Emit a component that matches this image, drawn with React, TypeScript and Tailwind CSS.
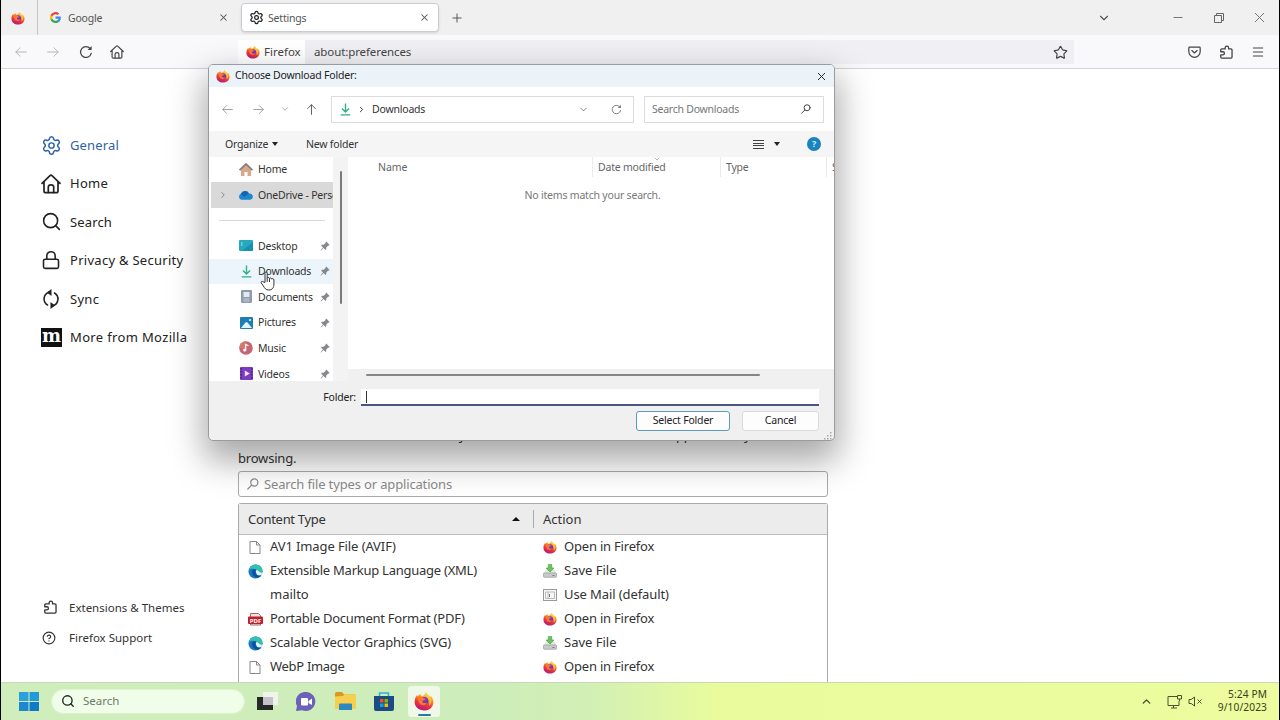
import React from 'react';
import { ChevronDown, ChevronRight, ChevronUp, Lock, Menu, Plus, Search, Settings, Star, X, CircleHelp } from 'lucide-react';

type IconProps = { size?: number; className?: string };

const FirefoxLogo = ({ size = 14, className = '' }: IconProps) => (
  <svg width={size} height={size} viewBox="0 0 32 32" className={className}>
    <defs>
      <linearGradient id="ffBody" x1="0.75" y1="0" x2="0.35" y2="1">
        <stop offset="0" stopColor="#ffe14a" />
        <stop offset="0.35" stopColor="#ff9823" />
        <stop offset="0.65" stopColor="#ea3540" />
        <stop offset="1" stopColor="#b5197c" />
      </linearGradient>
      <radialGradient id="ffGlobe" cx="0.5" cy="0.3" r="0.8">
        <stop offset="0" stopColor="#8d45d8" />
        <stop offset="1" stopColor="#4b2a9c" />
      </radialGradient>
    </defs>
    <path d="M19 2c1 3 4 4 7 8 .6-.8.5-2 .3-2.800C30 11 31.500 15 31 19c-1 8-7.500 12-15 12S1 26 1 17.500C1 12 3 9 5 6.500c.1 1 .3 1.700.8 2.200C7.500 6.500 9 6 10 4.500c.4 2 1.200 3.200 2.500 4C16 8 18 4.500 19 2z" fill="url(#ffBody)" />
    <circle cx="17" cy="15.500" r="6" fill="url(#ffGlobe)" />
    <path d="M5.500 9c4-1 7 0 9.500 2.500 2 .2 3 .8 3 1.700-1 1.800-4.500 1.300-4.500 3.800 1 3 5.500 2.500 7.500 1-1 5-8.500 6.500-12 2C6.500 17 7.500 13 5.500 9z" fill="#ff752c" />
    <path d="M19 2c1 3 4 4 7 8 3 5 2 11-2 14 1-4 1-9-2-12-3-3-5-5-3-10z" fill="#ffc83a" opacity="0.8" />
  </svg>
);

const GoogleLogo = () => (
  <svg width="11" height="11" viewBox="0 0 24 24">
    <path d="M23.500 12.300c0-.8-.1-1.600-.2-2.300H12v4.500h6.500a5.500 5.500 0 0 1-2.400 3.600v3h3.900c2.200-2.100 3.500-5.100 3.500-8.800z" fill="#4285F4" />
    <path d="M12 24c3.200 0 6-1.100 8-2.900l-3.900-3c-1.100.7-2.500 1.200-4.100 1.200-3.100 0-5.800-2.100-6.700-5H1.300v3.100A12 12 0 0 0 12 24z" fill="#34A853" />
    <path d="M5.300 14.300a7 7 0 0 1 0-4.600V6.600h-4a12 12 0 0 0 0 10.800z" fill="#FBBC05" />
    <path d="M12 4.800c1.800 0 3.300.6 4.600 1.800L20 3.200A12 12 0 0 0 1.300 6.600l4 3.100c.9-2.800 3.600-4.900 6.700-4.900z" fill="#EA4335" />
  </svg>
);

const ArrowIcon = ({ dir = 'left', size = 12, className = '' }: IconProps & { dir?: 'left' | 'right' | 'up' }) => {
  const turn = { left: 0, right: 180, up: 90 }[dir];
  return (
    <svg width={size} height={size} viewBox="0 0 12 12" fill="none" stroke="currentColor" strokeLinecap="round" strokeLinejoin="round" className={className}>
      <path transform={`rotate(${turn} 6 6)`} d="M11.300 6H.8M5 1.800.8 6 5 10.200" />
    </svg>
  );
};

const ReloadIcon = ({ size = 14, className = '' }: IconProps) => (
  <svg width={size} height={size} viewBox="0 0 14 14" fill="none" stroke="currentColor" strokeWidth="1.200" strokeLinecap="round" className={className}>
    <path d="M12.200 8.300A5.400 5.400 0 1 1 11.200 3.700" />
    <path d="M12.600 1v4H8.600z" fill="currentColor" stroke="none" />
  </svg>
);

const HomeIcon = ({ size = 14, className = '' }: IconProps) => (
  <svg width={size} height={size} viewBox="0 0 20 20" fill="none" stroke="currentColor" strokeWidth="1.700" strokeLinecap="round" strokeLinejoin="round" className={className}>
    <path d="M1 9.300 9 1.700c.6-.6 1.400-.6 2 0l8 7.600M3 8v9c0 1 .7 1.700 1.700 1.700h10.600c1 0 1.700-.7 1.700-1.700V8" />
    <path d="M7.300 18.500V13c0-1.400 1.200-2.200 2.700-2.200s2.700.8 2.700 2.200v5.500" />
  </svg>
);

const PuzzleIcon = ({ size = 13, className = '' }: IconProps) => (
  <svg width={size} height={size} viewBox="0 0 16 16" fill="none" stroke="currentColor" strokeWidth="1.500" strokeLinejoin="round" className={className}>
    <path d="M7 4.500V3.300a2 2 0 0 1 4 0v1.200h2.700c.7 0 1.200.5 1.200 1.200v8c0 .7-.5 1.200-1.200 1.200H3.200c-.7 0-1.200-.5-1.200-1.200v-2.400h2.400a1.800 1.800 0 0 0 0-3.600H2V5.700c0-.7.500-1.200 1.200-1.200z" />
  </svg>
);

const PocketIcon = () => (
  <svg width="13" height="12" viewBox="0 0 16 14" fill="none" stroke="currentColor" strokeWidth="1.500" strokeLinecap="round" strokeLinejoin="round">
    <path d="M2 1h12c.7 0 1 .4 1 1v4.500a7 7 0 0 1-14 0V2c0-.6.4-1 1-1z" />
    <path d="M4.800 5.200 8 8.200l3.200-3" />
  </svg>
);

const SyncIcon = () => (
  <svg width="20" height="20" viewBox="0 0 20 20" fill="none" stroke="currentColor" strokeWidth="1.600" strokeLinecap="round">
    <path d="M6.500 16A7 7 0 0 1 8 3.300M13.500 4A7 7 0 0 1 12 16.700" />
    <path d="M10.500 0v7L5.800 3.500zM9.500 20v-7l4.700 3.500z" fill="currentColor" stroke="none" />
  </svg>
);

const DownloadArrow = ({ size = 13 }: IconProps) => (
  <svg width={size} height={size} viewBox="0 0 13 14" fill="none" stroke="#2fae87" strokeWidth="1.500" className="shrink-0">
    <path d="M6.500.5v9M2.700 6l3.800 3.800L10.300 6M1.300 12.800h10.400" />
  </svg>
);

const PinIcon = () => (
  <svg width="10" height="10" viewBox="0 0 10 10" fill="#84888d" className="shrink-0">
    <path d="M6.300.6 9.600 3.900 8.800 4.700 8.200 4.600 6.300 6.600 6.200 8.300 5.500 9 3.600 7.100 1 9.600.5 9.300 3 6.500 1.100 4.600 1.800 3.800 3.600 3.800 5.600 1.900 5.500 1.400z" />
  </svg>
);

const MagnifierLeft = ({ size = 11, className = '' }: IconProps) => (
  <svg width={size} height={size} viewBox="0 0 12 12" fill="none" stroke="currentColor" strokeWidth="1.200" strokeLinecap="round" className={className}>
    <circle cx="7.300" cy="4.500" r="3.600" />
    <path d="M4.600 7.200.8 11" />
  </svg>
);

const EdgeLogo = () => (
  <svg width="15" height="15" viewBox="0 0 16 16">
    <circle cx="8" cy="8" r="7.500" fill="#1676c4" />
    <path d="M1 6.500C2 2.500 5 .5 8.300.5c4.200 0 7.200 3 7.200 6.300 0 2.300-1.700 3.500-3.500 3.500-1.500 0-2.500-.6-2.300-1.300.3-.6.4-1 .2-1.800C9 5 4 4 1 6.500z" fill="#35bfb0" />
    <path d="M4.500 8c-.5 3.700 2.500 6.700 6.500 6.300 1.300-.3 2.500-1 3.200-2.300-3 1-5.700 0-6-2.500-.2-1.300.3-2.300 1-2.700C7.500 5 4.700 5.800 4.500 8z" fill="#0e4f9e" />
    <path d="M8.800 9.500c-1-1.500-.4-2.700.9-3 2 1.500 2.600 3.200 6 3-.5 1.500-2 2.700-3.800 2.500-1.600-.1-2.600-1-3.100-2.500z" fill="#e6f6f6" />
  </svg>
);

const FileIcon = () => (
  <svg width="12" height="13" viewBox="0 0 12 13" fill="#fff" stroke="#888">
    <path d="M1 .5h6.500L11 4v8.500H1zM7.500.5V4H11" />
  </svg>
);

const PdfIcon = () => (
  <svg width="15" height="13" viewBox="0 0 15 13">
    <path d="M2.500.5h8l2 2V12h-10z" fill="#f2dede" stroke="#a66" />
    <rect x="0" y="3.500" width="15" height="7.500" rx="1" fill="#bf1e2b" />
    <text x="7.500" y="9.500" fontSize="6" fontWeight="700" textAnchor="middle" fill="#fff" fontFamily="Noto Sans, sans-serif">PDF</text>
  </svg>
);

const SaveIcon = () => (
  <svg width="14" height="14" viewBox="0 0 14 14">
    <path d="M3 5.500h8l2.500 4H.5z" fill="#e2e4e3" />
    <rect x=".5" y="9" width="13" height="4.300" rx=".8" fill="#c6cac8" stroke="#989e9b" strokeWidth=".7" />
    <path d="M5.300.5h3.400V4H11L7 8 3 4h2.300z" fill="#6cc35e" stroke="#429a3b" strokeWidth=".6" />
    <rect x="9.500" y="11" width="2" height="1" fill="#5c8f52" />
  </svg>
);

const MailAppIcon = () => (
  <svg width="14" height="12" viewBox="0 0 14 12" fill="#f8f8f8" stroke="#999">
    <rect x=".5" y=".5" width="13" height="11" />
    <path d="M2.500 3v6.500h9V3zM5 3v6.500" stroke="#bbb" />
    <path d="M6.500 5v3" stroke="#777" />
  </svg>
);

const FOLDER_ICONS: Record<string, React.ReactNode> = {
  Desktop: (
    <svg width="14" height="11" viewBox="0 0 14 11"><rect width="14" height="11" rx="1" fill="#27a9bd" /><path d="M14 2v8a1 1 0 0 1-1 1H3z" fill="#1a8fb3" /><path d="M2 3h1.500M2 5h1.500" stroke="#b4f0f3" /></svg>
  ),
  Downloads: <DownloadArrow />,
  Documents: (
    <svg width="11" height="13" viewBox="0 0 11 13"><rect width="11" height="13" rx="1" fill="#8d9bad" /><rect x="2.500" y="2" width="6" height="5" fill="#e3e9ef" /><path d="M2.500 9h6M2.500 11h6" stroke="#c8d1dc" /></svg>
  ),
  Pictures: (
    <svg width="13" height="12" viewBox="0 0 13 12"><rect width="13" height="12" rx="1" fill="#1f7db4" /><path d="m1 11 4.500-5.500q1-.8 2 0L12 11z" fill="#dff3fb" /><circle cx="10" cy="3" r="1.100" fill="#dff3fb" /></svg>
  ),
  Music: (
    <svg width="14" height="14" viewBox="0 0 14 14"><circle cx="7" cy="7" r="6.800" fill="#c86573" /><path d="M.2 7a6.800 6.800 0 0 1 6.800-6.800V7z" fill="#d5796a" /><circle cx="5.700" cy="9" r="1.600" fill="#fff" /><path d="M6.700 9V3.500l2.800 1.200" stroke="#fff" strokeWidth="1.200" fill="none" /></svg>
  ),
  Videos: (
    <svg width="13" height="13" viewBox="0 0 13 13"><rect width="13" height="13" rx="1" fill="#7b3cc0" /><path d="M1.200 1v11M11.800 1v11" stroke="#4c1e86" strokeWidth="1.400" strokeDasharray="1.500 1.500" /><path d="m4.800 3.500 5 3-5 3z" fill="#f2e3ff" /></svg>
  ),
};

const PREF_LINKS = [
  { label: 'General', track: 'tracking-[0.15px]', icon: <Settings size={21} strokeWidth={1.7} />, active: true },
  { label: 'Home', track: 'tracking-[0.3px]', icon: <HomeIcon size={20} /> },
  { label: 'Search', track: 'tracking-[0.15px]', icon: <Search size={21} strokeWidth={1.8} className="-mt-px" /> },
  { label: 'Privacy & Security', track: 'tracking-[0.28px]', icon: <Lock size={20} strokeWidth={1.9} className="-mt-px" /> },
  { label: 'Sync', track: 'tracking-[0.3px]', icon: <SyncIcon /> },
  {
    label: 'More from Mozilla',
    track: 'tracking-[0.35px]',
    icon: (
      <span className="flex h-[19px] w-[21px] items-center justify-center bg-[#111] pb-[3px] font-['DejaVu_Serif',serif] text-[18px] leading-[16px] font-bold text-white">m</span>
    ),
  },
];

const FILE_TYPES = [
  { name: 'AV1 Image File (AVIF)', track: 'tracking-[-0.1px]', icon: <FileIcon />, action: 'Open in Firefox' },
  { name: 'Extensible Markup Language (XML)', track: 'tracking-[-0.25px]', icon: <EdgeLogo />, action: 'Save File' },
  { name: 'mailto', track: 'tracking-normal', icon: null, action: 'Use Mail (default)' },
  { name: 'Portable Document Format (PDF)', track: 'tracking-[-0.25px]', icon: <PdfIcon />, action: 'Open in Firefox' },
  { name: 'Scalable Vector Graphics (SVG)', track: 'tracking-[-0.13px]', icon: <EdgeLogo />, action: 'Save File' },
  { name: 'WebP Image', track: 'tracking-[-0.3px]', icon: <FileIcon />, action: 'Open in Firefox' },
];

const ACTIONS: Record<string, { icon: React.ReactNode; track: string }> = {
  'Open in Firefox': { icon: <FirefoxLogo size={14} />, track: 'tracking-[-0.2px]' },
  'Save File': { icon: <SaveIcon />, track: 'tracking-normal' },
  'Use Mail (default)': { icon: <MailAppIcon />, track: 'tracking-[-0.1px]' },
};

const TabBar = () => (
  <div className="flex h-[35px] shrink-0 items-center bg-[#f0f0f0] text-[10.500px] tracking-[-0.2px] text-[#555]">
    <div className="flex h-full w-[37px] items-center justify-center border-r border-[#c4c4c8] pr-[3px]">
      <FirefoxLogo size={14} />
    </div>
    <div className="flex h-full w-[203px] items-center pr-[12px] pl-[12px]">
      <GoogleLogo />
      <span className="ml-[7px] flex-1 pt-[2px]">Google</span>
      <X size={11} strokeWidth={2.2} />
    </div>
    <div className="flex h-[29px] w-[198px] items-center rounded-[4px] border border-[#ccccd4] bg-white pr-[8px] pl-[7px] shadow-sm">
      <Settings size={15} strokeWidth={2} className="text-[#222]" />
      <span className="ml-[4px] flex-1 pt-[2px]">Settings</span>
      <X size={11} strokeWidth={2.2} />
    </div>
    <Plus size={14} strokeWidth={1.7} className="ml-[11px]" />
    <ChevronDown size={14} strokeWidth={2} className="ml-auto" />
    <svg width="10" height="10" viewBox="0 0 10 10" stroke="#777" className="ml-[62px]"><path d="M.5 4.500h9" /></svg>
    <svg width="10" height="10" viewBox="0 0 10 10" fill="none" stroke="#666" className="ml-[31px]"><path d="M.5 2.500h7v7h-7zM2.500 2.500v-2h7v7h-2" /></svg>
    <svg width="11" height="11" viewBox="0 0 11 11" stroke="#777" className="mr-[14px] ml-[30px]"><path d="m1 1 9 9M10 1l-9 9" /></svg>
  </div>
);

const NavBar = () => (
  <div className="flex h-[34px] shrink-0 items-center border-b border-[#d4d4d8] bg-[#f9f9fb] pt-px text-[11.500px] text-[#444]">
    <ArrowIcon className="ml-[14px] text-[#b5b5b8]" />
    <ArrowIcon dir="right" className="ml-[20px] text-[#b5b5b8]" />
    <ReloadIcon className="ml-[20px]" />
    <HomeIcon size={14} className="ml-[17px]" />
    <div className="ml-[114px] flex h-[24px] w-[836px] items-center bg-[#f0f0f4]">
      <div className="flex h-full w-[67px] items-center gap-[4px] bg-white pl-[8px]">
        <FirefoxLogo size={14} />
        <span>Firefox</span>
      </div>
      <span className="ml-[9px] flex-1 tracking-[-0.1px]">about:preferences</span>
      <Star size={15} strokeWidth={1.9} className="mr-[6px]" />
    </div>
    <div className="mr-[14px] ml-auto flex items-center gap-[18px]">
      <PocketIcon />
      <PuzzleIcon size={14} />
      <Menu size={14} strokeWidth={1.8} />
    </div>
  </div>
);

const PrefSidebar = () => (
  <div className="flex w-[237px] shrink-0 flex-col pt-[57px]">
    {PREF_LINKS.map(link => (
      <div key={link.label} className={`flex h-[38.4px] items-center text-[13px] ${link.active ? 'text-[#2f63a8]' : 'text-[#222]'}`}>
        <span className="ml-[39px] flex w-[30px] justify-start pl-px">{link.icon}</span>
        <span className={`pt-px ${link.track}`}>{link.label}</span>
      </div>
    ))}
    <div className="mt-auto mb-[29px] text-[11.500px] text-[#333]">
      <div className="flex h-[30.500px] items-center">
        <span className="ml-[42px] w-[26px]"><PuzzleIcon size={14} /></span>
        Extensions &amp; Themes
      </div>
      <div className="flex h-[30.500px] items-center">
        <span className="ml-[41px] w-[27px]"><CircleHelp size={14} strokeWidth={2} /></span>
        Firefox Support
      </div>
    </div>
  </div>
);

const PrefContent = () => (
  <div className="mt-[355px] w-[590px] text-[13px] text-[#333]">
    <p className="leading-[23px] tracking-[-0.15px] whitespace-nowrap">
      Choose how Firefox handles the files you download from the web or the applications you use while
      <br />
      <span className="tracking-[-0.2px]">browsing.</span>
    </p>
    <div className="mt-px flex h-[26px] items-center rounded-[3px] border border-[#aaa] pl-[8px] tracking-[-0.15px] text-[#8a8a8a]">
      <MagnifierLeft size={12} />
      <span className="ml-[5px] pt-px">Search file types or applications</span>
    </div>
    <div className="mt-[6px] rounded-t-[3px] border border-b-0 border-[#aaa] pb-[5px]">
      <div className="flex h-[31px] items-center border-b border-[#bbb] bg-[#ececec]">
        <span className="flex-1 pt-px pl-[9px] tracking-[-0.3px]">Content Type</span>
        <svg width="8" height="4" viewBox="0 0 8 4" className="mr-[13px]"><path d="M0 4 4 0l4 4z" fill="#111" /></svg>
        <div className="flex h-[18px] w-[294px] items-center border-l border-[#aaa] pt-px pl-[9px]">Action</div>
      </div>
      {FILE_TYPES.map(row => (
        <div key={row.name} className="flex h-[24px] items-center">
          <span className="ml-[8px] flex w-[16px] justify-center">{row.icon}</span>
          <span className={`ml-[7px] w-[272px] ${row.track}`}>{row.name}</span>
          <span className="flex w-[16px] justify-center">{ACTIONS[row.action].icon}</span>
          <span className={`ml-[6px] ${ACTIONS[row.action].track}`}>{row.action}</span>
        </div>
      ))}
    </div>
  </div>
);

const FolderDialog = () => (
  <div className="absolute top-[64px] left-[207px] flex h-[377px] w-[627px] flex-col overflow-hidden rounded-[5px] border border-[#9b9b9f] bg-[#f0f0f0] text-[10.500px] tracking-[-0.2px] text-[#333] shadow-[0_16px_34px_4px_rgba(0,0,0,0.34)]">
    <div className="flex h-[22px] shrink-0 items-center bg-[#ecf3f8] pl-[7px] text-[#222]">
      <FirefoxLogo size={14} />
      <span className="ml-[5px] flex-1">Choose Download Folder:</span>
      <X size={13} strokeWidth={1.8} className="mr-[6px]" />
    </div>
    <div className="flex h-[44px] shrink-0 items-center bg-white">
      <ArrowIcon size={11} className="ml-[13px] text-[#999]" />
      <ArrowIcon size={11} dir="right" className="ml-[20px] text-[#999]" />
      <ChevronDown size={10} className="ml-[16px] text-[#999]" />
      <ArrowIcon size={11} dir="up" className="ml-[16px] text-[#555]" />
      <div className="ml-[14px] flex h-[27px] w-[303px] items-center border border-[#dcdcdc] pl-[7px]">
        <DownloadArrow />
        <ChevronRight size={9} strokeWidth={2.5} className="ml-[5px]" />
        <span className="ml-[6px] flex-1 pt-[2px]">Downloads</span>
        <ChevronDown size={11} className="text-[#777]" />
        <ReloadIcon size={11} className="mr-[11px] ml-[22px] text-[#777]" />
      </div>
      <div className="ml-[10px] flex h-[27px] w-[180px] items-center border border-[#dcdcdc] pr-[12px] pl-[7px] text-[#777]">
        <span className="flex-1 pt-[2px] tracking-[-0.25px]">Search Downloads</span>
        <MagnifierLeft size={10} className="text-[#444]" />
      </div>
    </div>
    <div className="flex h-[26px] shrink-0 items-center bg-[#f5f5f5] pl-[16px]">
      <span className="w-[47px] pt-px">Organize</span>
      <svg width="6" height="4" viewBox="0 0 6 4"><path d="M0 0h6L3 4z" fill="#222" /></svg>
      <span className="ml-[28px] flex-1 pt-px">New folder</span>
      <svg width="11" height="9" viewBox="0 0 11 9" stroke="#444"><path d="M0 .5h11M0 3.500h11M0 5.500h11M0 8.500h11" /></svg>
      <svg width="6" height="4" viewBox="0 0 6 4" className="ml-[10px]"><path d="M0 0h6L3 4z" fill="#222" /></svg>
      <span className="mr-[13px] ml-[27px] flex h-[14px] w-[14px] items-center justify-center rounded-full bg-[#1b83bd] text-[9px] font-bold text-[#c9effb]">?</span>
    </div>
    <div className="flex h-[224px] shrink-0">
      <div className="w-[124px] overflow-hidden bg-white">
        <div className="flex h-[25px] items-center">
          <svg width="14" height="13" viewBox="0 0 14 13" className="ml-[30px]"><path d="M2 6v7h3.500V9h3v4H12V6L7 2z" fill="#d7a98a" /><path d="M.5 7.200 7 1l6.500 6.200" fill="none" stroke="#8b7d78" strokeWidth="1.800" /></svg>
          <span className="ml-[5px]">Home</span>
        </div>
        <div className="ml-[2px] flex h-[26px] items-center bg-[#d9d9d9]">
          <ChevronRight size={10} className="ml-[7px] text-[#777]" />
          <svg width="15" height="9" viewBox="0 0 15 9" className="ml-[10px] shrink-0"><path d="M3.500 8.800A3.300 3.300 0 0 1 3 2.600 4.500 4.500 0 0 1 11 2.500a3.200 3.200 0 0 1 1.200 6.300z" fill="#1c86d1" /><path d="M3 2.600A4.500 4.500 0 0 1 11 2.500L6 6z" fill="#1467ad" /></svg>
          <span className="ml-[5px] w-[75px] overflow-hidden pt-px whitespace-nowrap">OneDrive - Personal</span>
        </div>
        <div className="flex h-[25px] items-center"><div className="ml-[10px] h-px w-[106px] bg-[#d8d8d8]" /></div>
        {Object.entries(FOLDER_ICONS).map(([name, icon]) => (
          <div key={name} className={`flex h-[25.600px] items-center pl-[29px] ${name === 'Downloads' ? 'bg-[#ebf5fb]' : ''}`}>
            <span className="flex w-[16px] shrink-0 justify-center">{icon}</span>
            <span className="ml-[4px] flex-1 pt-[1.500px]">{name}</span>
            <span className="mr-[3px]"><PinIcon /></span>
          </div>
        ))}
      </div>
      <div className="flex w-[15px] justify-center bg-[#f3f3f3] pt-[14px]">
        <div className="h-[133px] w-[2px] rounded bg-[#7b7b7b]" />
      </div>
      <div className="flex flex-1 flex-col">
        <div className="flex-1 bg-white">
          <div className="flex h-[20px] items-center overflow-hidden text-[#666]">
            <span className="flex-1 pt-[2px] pl-[30px] tracking-[-0.1px]">Name</span>
            <div className="relative flex h-full w-[128px] items-center border-l border-[#ebebeb] pt-[2px] pl-[5px] tracking-[-0.2px]">
              Date modified
              <ChevronDown size={8} strokeWidth={1.5} className="absolute -top-[2px] left-[60px]" />
            </div>
            <div className="flex h-full w-[106px] items-center border-l border-[#ebebeb] pt-[2px] pl-[5px]">Type</div>
            <div className="flex h-full w-[8px] items-center overflow-hidden border-l border-[#ebebeb] pt-[2px] pl-[5px]">Size</div>
          </div>
          <p className="mt-[11px] pl-[3px] text-center text-[#777]">No items match your search.</p>
        </div>
        <div className="flex h-[12px] items-center bg-[#f0f0f0] pl-[18px]">
          <div className="h-[2px] w-[394px] rounded bg-[#868686]" />
        </div>
      </div>
    </div>
    <div className="mt-[8px] flex h-[17px] shrink-0 items-center justify-end pr-[15px]">
      <span className="mr-[5px] text-[#222]">Folder:</span>
      <div className="flex h-full w-[458px] items-center border-b-2 border-[#4a5580] bg-white pl-[5px]">
        <div className="h-[12px] w-px bg-[#333]" />
      </div>
    </div>
    <div className="mt-[5px] flex h-[20px] shrink-0 items-center justify-end gap-[12px] pr-[15px] text-[#222]">
      <button className="flex h-full w-[94px] items-center justify-center rounded-[3px] border border-[#5d9bb8] bg-[#fdfdfd]">Select Folder</button>
      <button className="flex h-full w-[77px] items-center justify-center rounded-[3px] border border-[#dadada] bg-[#fdfdfd]">Cancel</button>
    </div>
    <svg width="8" height="8" viewBox="0 0 8 8" className="absolute right-[2px] bottom-0" fill="#aaa"><path d="M6 0h1.500v1.500H6zM6 3h1.500v1.500H6zM3 3h1.500v1.500H3zM6 6h1.500v1.500H6zM3 6h1.500v1.500H3zM0 6h1.500v1.500H0z" /></svg>
  </div>
);

const HandCursor = () => (
  <svg width="16" height="21" viewBox="0 0 16 21" className="absolute top-[270px] left-[259px]" fill="#fff" stroke="#333" strokeLinejoin="round">
    <path d="M5 12.500V3.200c0-1.600 2.200-1.600 2.200 0v5c.2-1 2.200-1 2.300.4.3-1 2.100-.8 2.200.5.300-.8 2.200-.6 2.200.8V14c0 3.500-1.500 6-5 6-3.300 0-4.200-1.800-5.500-4L1.200 12.800c-.6-1.300 1-2 2-1z" />
    <path d="M7.200 8v4M9.500 8.800v3.200" />
  </svg>
);

const Taskbar = () => (
  <div className="flex h-[38px] shrink-0 items-center border-t border-[#c9d8b8] bg-[linear-gradient(90deg,#d0eebb_0%,#cdedba_38%,#d2f0b5_46%,#e9fb9c_56%,#ecfc9e_100%)] pb-px">
    <svg width="20" height="19" viewBox="0 0 20 19" className="ml-[18px]"><path d="M0 0h9.500v9H0z" fill="#2d9fdc" /><path d="M10.500 0H20v9h-9.500z" fill="#229ad8" /><path d="M0 10h9.500v9H0z" fill="#1b88cf" /><path d="M10.500 10H20v9h-9.500z" fill="#0f7ac6" /></svg>
    <div className="ml-[12px] flex h-[25px] w-[194px] items-center rounded-full border border-[#dcf3d0] bg-[#f0fde9] pl-[9px] text-[11.500px] text-[#6f7a6c]">
      <Search size={14} strokeWidth={2.3} className="text-[#222]" />
      <span className="ml-[8px]">Search</span>
    </div>
    <svg width="21" height="18" viewBox="0 0 21 18" className="ml-[12px]"><path d="M6 0h15v13H6z" fill="#eff5ec" /><path d="M0 5h16v13H0z" fill="#272b27" /><path d="M6 5h10v8H6z" fill="#c4c1c8" /></svg>
    <svg width="20" height="19" viewBox="0 0 20 19" className="ml-[18px]"><path d="M10 0a9.500 9.500 0 1 1-4 18.200L0 19l1-5A9.500 9.500 0 0 1 10 0z" fill="#6a61b8" /><rect x="5" y="6" width="7" height="7.500" rx="1" fill="#fff" /><path d="m12.500 9 3.500-2.500v6.500L12.500 11z" fill="#fff" /></svg>
    <svg width="21" height="18" viewBox="0 0 21 18" className="ml-[19px]"><path d="M0 1.500Q0 0 1.500 0H7l2 2.500h10.500q1.500 0 1.500 1.500v13H0z" fill="#d79a1e" /><path d="M0 4.500 8 4l1.500-1.500H21V17H0z" fill="#f8cf4d" /><path d="M4 12.500q0-1 1-1h11q1 0 1 1V18H4z" fill="#2b88c0" /></svg>
    <svg width="20" height="19" viewBox="0 0 20 19" className="ml-[18px]"><path d="M5.500 5V1h9v4" fill="none" stroke="#2fb0dc" strokeWidth="1.500" /><path d="M0 4h20v13q0 2-2 2H2q-2 0-2-2z" fill="#1d4b83" /><path d="M6 7h3.500v3.500H6z" fill="#f25022" /><path d="M10.500 7H14v3.500h-3.500z" fill="#7fba00" /><path d="M6 11.500h3.500V15H6z" fill="#00a4ef" /><path d="M10.500 11.500H14V15h-3.500z" fill="#ffb900" /></svg>
    <div className="ml-[14px] flex h-[31px] w-[32px] flex-col items-center rounded-[3px] bg-[#f0f9e8] pt-[5px]">
      <FirefoxLogo size={20} />
      <div className="mt-[3px] h-[2px] w-[13px] rounded bg-[#2a77a8]" />
    </div>
    <ChevronUp size={13} strokeWidth={2.3} className="ml-auto text-[#3d4426]" />
    <svg width="15" height="15" viewBox="0 0 15 15" fill="none" stroke="#4a5230" className="ml-[14px]"><path d="M10 2.500H1v9h11V7M6.500 11.500V14M4 14h6M10.500 1.500h4v3.500h-4zM12.500 5v2" /></svg>
    <svg width="15" height="11" viewBox="0 0 15 11" fill="none" stroke="#4a5230" className="ml-[6px]"><path d="M1 3.500h2.200L6.500 1v9L3.200 7.500H1zM9.500 3.500l4 4M13.500 3.500l-4 4" /></svg>
    <div className="mr-[12px] ml-[15px] text-right text-[10.200px] leading-[13px] tracking-[0.1px] text-[#3a4020]">
      <div>5:24 PM</div>
      <div>9/10/2023</div>
    </div>
  </div>
);

export default function App() {
  return (
    <div className="relative flex h-[720px] w-[1280px] flex-col overflow-hidden border-x border-black bg-white font-['Noto_Sans','Open_Sans',sans-serif]">
      <TabBar />
      <NavBar />
      <div className="flex min-h-0 flex-1 overflow-hidden">
        <PrefSidebar />
        <PrefContent />
      </div>
      <Taskbar />
      <FolderDialog />
      <HandCursor />
    </div>
  );
}
